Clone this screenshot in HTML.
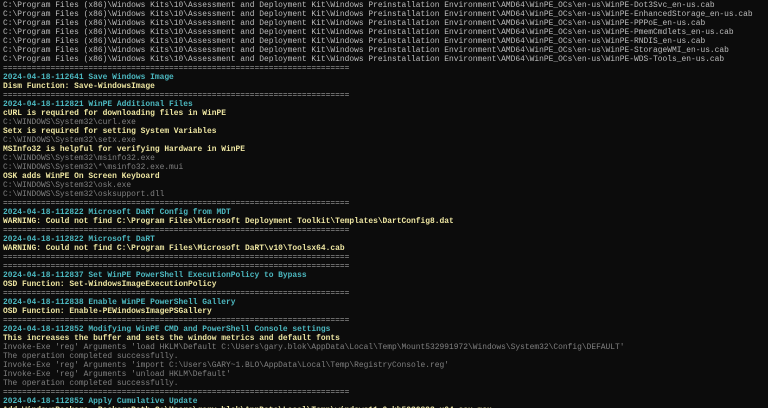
<!DOCTYPE html>
<html><head><meta charset="utf-8"><style>
html,body{margin:0;padding:0;background:#0c0c0c;width:768px;height:408px;overflow:hidden}
pre{margin:0;padding:1px 0 0 3px;font-family:"Liberation Mono",monospace;font-size:7.91px;line-height:9px;color:#bcbcbc;white-space:pre}
.c{color:#4cb8c0;font-weight:bold}.y{color:#eee6a2;font-weight:bold}.g{color:#808080}.s{color:#a0a0a0}
</style></head><body><pre>C:\Program Files (x86)\Windows Kits\10\Assessment and Deployment Kit\Windows Preinstallation Environment\AMD64\WinPE_OCs\en-us\WinPE-Dot3Svc_en-us.cab
C:\Program Files (x86)\Windows Kits\10\Assessment and Deployment Kit\Windows Preinstallation Environment\AMD64\WinPE_OCs\en-us\WinPE-EnhancedStorage_en-us.cab
C:\Program Files (x86)\Windows Kits\10\Assessment and Deployment Kit\Windows Preinstallation Environment\AMD64\WinPE_OCs\en-us\WinPE-PPPoE_en-us.cab
C:\Program Files (x86)\Windows Kits\10\Assessment and Deployment Kit\Windows Preinstallation Environment\AMD64\WinPE_OCs\en-us\WinPE-PmemCmdlets_en-us.cab
C:\Program Files (x86)\Windows Kits\10\Assessment and Deployment Kit\Windows Preinstallation Environment\AMD64\WinPE_OCs\en-us\WinPE-RNDIS_en-us.cab
C:\Program Files (x86)\Windows Kits\10\Assessment and Deployment Kit\Windows Preinstallation Environment\AMD64\WinPE_OCs\en-us\WinPE-StorageWMI_en-us.cab
C:\Program Files (x86)\Windows Kits\10\Assessment and Deployment Kit\Windows Preinstallation Environment\AMD64\WinPE_OCs\en-us\WinPE-WDS-Tools_en-us.cab
<span class="s">=========================================================================</span>
<span class="c">2024-04-18-112641 Save Windows Image</span>
<span class="y">Dism Function: Save-WindowsImage</span>
<span class="s">=========================================================================</span>
<span class="c">2024-04-18-112821 WinPE Additional Files</span>
<span class="y">cURL is required for downloading files in WinPE</span>
<span class="g">C:\WINDOWS\System32\curl.exe</span>
<span class="y">Setx is required for setting System Variables</span>
<span class="g">C:\WINDOWS\System32\setx.exe</span>
<span class="y">MSInfo32 is helpful for verifying Hardware in WinPE</span>
<span class="g">C:\WINDOWS\System32\msinfo32.exe</span>
<span class="g">C:\WINDOWS\System32\*\msinfo32.exe.mui</span>
<span class="y">OSK adds WinPE On Screen Keyboard</span>
<span class="g">C:\WINDOWS\System32\osk.exe</span>
<span class="g">C:\WINDOWS\System32\osksupport.dll</span>
<span class="s">=========================================================================</span>
<span class="c">2024-04-18-112822 Microsoft DaRT Config from MDT</span>
<span class="y">WARNING: Could not find C:\Program Files\Microsoft Deployment Toolkit\Templates\DartConfig8.dat</span>
<span class="s">=========================================================================</span>
<span class="c">2024-04-18-112822 Microsoft DaRT</span>
<span class="y">WARNING: Could not find C:\Program Files\Microsoft DaRT\v10\Toolsx64.cab</span>
<span class="s">=========================================================================</span>
<span class="s">=========================================================================</span>
<span class="c">2024-04-18-112837 Set WinPE PowerShell ExecutionPolicy to Bypass</span>
<span class="y">OSD Function: Set-WindowsImageExecutionPolicy</span>
<span class="s">=========================================================================</span>
<span class="c">2024-04-18-112838 Enable WinPE PowerShell Gallery</span>
<span class="y">OSD Function: Enable-PEWindowsImagePSGallery</span>
<span class="s">=========================================================================</span>
<span class="c">2024-04-18-112852 Modifying WinPE CMD and PowerShell Console settings</span>
<span class="y">This increases the buffer and sets the window metrics and default fonts</span>
<span class="g">Invoke-Exe 'reg' Arguments 'load HKLM\Default C:\Users\gary.blok\AppData\Local\Temp\Mount532991972\Windows\System32\Config\DEFAULT'</span>
<span class="g">The operation completed successfully.</span>
<span class="g">Invoke-Exe 'reg' Arguments 'import C:\Users\GARY~1.BLO\AppData\Local\Temp\RegistryConsole.reg'</span>
<span class="g">Invoke-Exe 'reg' Arguments 'unload HKLM\Default'</span>
<span class="g">The operation completed successfully.</span>
<span class="s">=========================================================================</span>
<span class="c">2024-04-18-112852 Apply Cumulative Update</span>
<span class="y">Add-WindowsPackage -PackagePath C:\Users\gary.blok\AppData\Local\Temp\windows11.0-kb5036893-x64_ssu.msu</span>
</pre></body></html>
